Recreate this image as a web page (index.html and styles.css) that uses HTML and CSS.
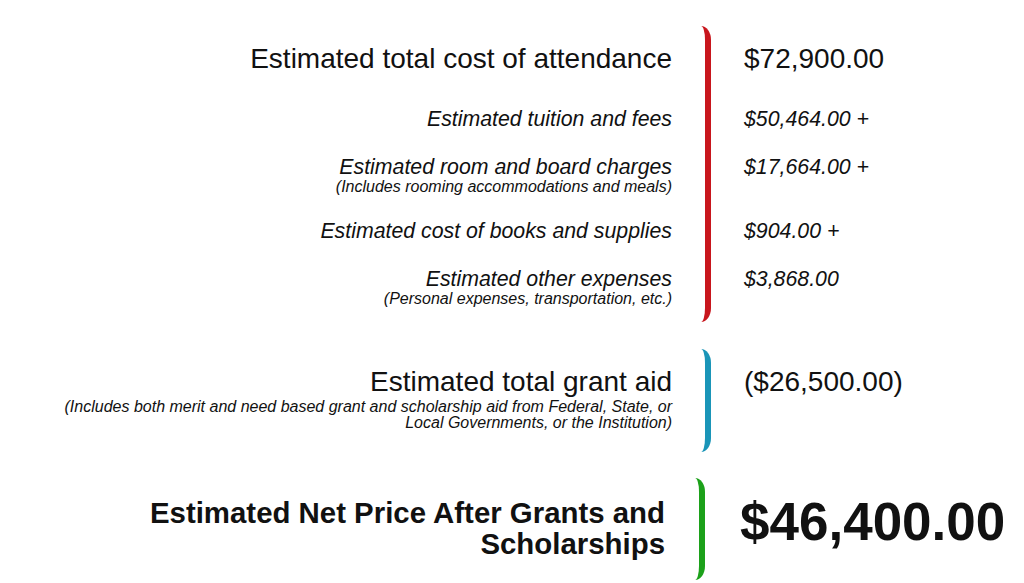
FILE: index.html
```html
<!DOCTYPE html>
<html lang="en">
<head>
<meta charset="utf-8">
<title>Estimated Net Price</title>
<link rel="stylesheet" href="styles.css">
</head>
<body>
<main class="sheet">
  <section class="group group-cost">
    <div class="bracket bracket-red span-5"></div>
    <div class="label label-head first">Estimated total cost of attendance</div>
    <div class="value value-head first">$72,900.00</div>

    <div class="label label-item">Estimated tuition and fees</div>
    <div class="value value-item">$50,464.00 +</div>

    <div class="label label-item">Estimated room and board charges<span class="note">(Includes rooming accommodations and meals)</span></div>
    <div class="value value-item">$17,664.00 +</div>

    <div class="label label-item">Estimated cost of books and supplies</div>
    <div class="value value-item">$904.00 +</div>

    <div class="label label-item last">Estimated other expenses<span class="note">(Personal expenses, transportation, etc.)</span></div>
    <div class="value value-item last">$3,868.00</div>
  </section>

  <section class="group group-grant">
    <div class="bracket bracket-blue"></div>
    <div class="label label-head first last">Estimated total grant aid<span class="note">(Includes both merit and need based grant and scholarship aid from Federal, State, or Local Governments, or the Institution)</span></div>
    <div class="value value-head first last">($26,500.00)</div>
  </section>

  <section class="group group-net">
    <div class="bracket bracket-green"></div>
    <div class="label label-net">Estimated Net Price After Grants and Scholarships</div>
    <div class="value value-net">$46,400.00</div>
  </section>
</main>
</body>
</html>
```

FILE: styles.css
```css
* { box-sizing: border-box; }

html, body {
  margin: 0;
  padding: 0;
  background: #ffffff;
}

body {
  font-family: "Liberation Sans", Arial, Helvetica, sans-serif;
  color: #111111;
}

.sheet {
  padding-top: 26px;
  display: flex;
  flex-direction: column;
}

.group {
  display: grid;
  grid-template-columns: 672px 39px 1fr;
  row-gap: 24px;
}

.group-grant { margin-top: 27px; }
.group-net { margin-top: 26px; }

.bracket {
  grid-column: 2;
  grid-row: 1 / span 1;
  justify-self: end;
  width: 10px;
  border-right: 6px solid;
  border-radius: 0 10px 10px 0 / 0 14px 14px 0;
}

.span-5 { grid-row: 1 / span 5; }

.bracket-red { border-color: #c8161d; }
.bracket-blue { border-color: #1a95b8; }
.bracket-green {
  border-color: #1ca11a;
  margin-right: 6px;
}

.label {
  grid-column: 1;
  text-align: right;
}

.value {
  grid-column: 3;
  padding-left: 33px;
}

.label-head,
.value-head {
  font-size: 28px;
  line-height: 32px;
}

.label-item,
.value-item {
  font-size: 21.3px;
  line-height: 24px;
  font-style: italic;
}

.first { margin-top: 17px; }
.group-cost .first { margin-bottom: 8px; }
.group-cost .last { margin-bottom: 15px; }
.group-grant .label.last { margin-bottom: 21px; }

.note {
  display: block;
  font-size: 16px;
  line-height: 16px;
  font-style: italic;
}

.group-grant .note {
  margin-top: 1px;
  padding-left: 56px;
}

.label-net {
  font-size: 29.4px;
  line-height: 31px;
  font-weight: 700;
  margin: 19px 7px 21px 0;
  padding-left: 120px;
}

.value-net {
  font-size: 53px;
  line-height: 53px;
  font-weight: 700;
  margin-top: 17px;
  padding-left: 29px;
}
```
